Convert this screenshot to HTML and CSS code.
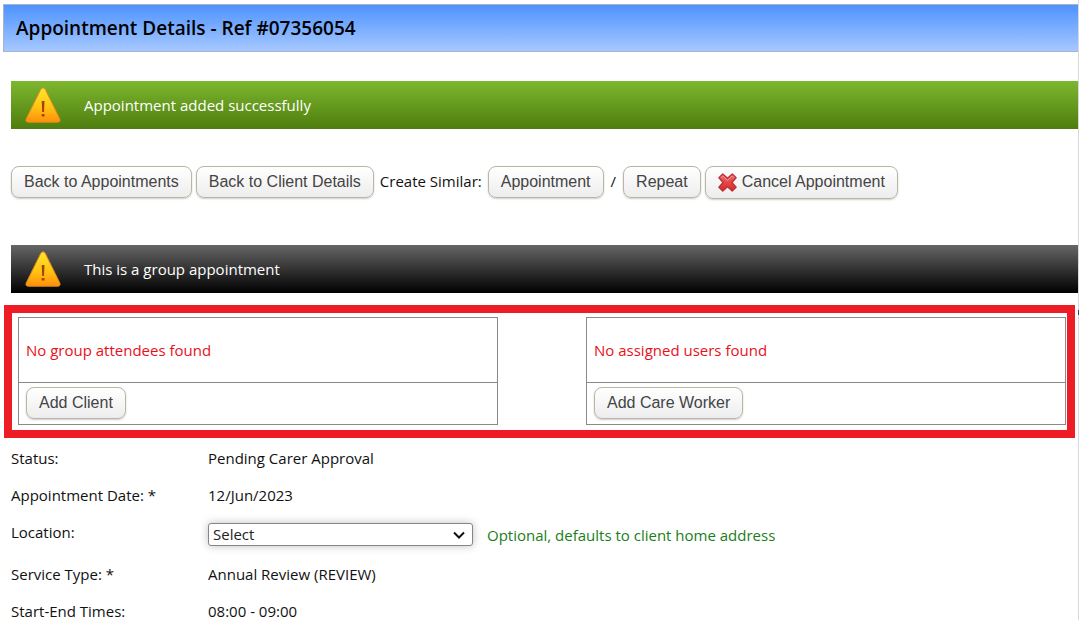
FILE: index.html
```html
<!DOCTYPE html>
<html lang="en">
<head>
    <meta charset="UTF-8">
    <meta name="viewport" content="width=device-width, initial-scale=1.0">
    <title>Appointment Details</title>
    <link rel="stylesheet" href="styles.css">
</head>
<body>
<svg class="defs" width="0" height="0" aria-hidden="true">
    <defs>
        <linearGradient id="warnFill" x1="0" y1="0" x2="0" y2="1">
            <stop offset="0" stop-color="#ffe52e"/>
            <stop offset="0.55" stop-color="#ffc512"/>
            <stop offset="1" stop-color="#ff8f0c"/>
        </linearGradient>
        <linearGradient id="crossFill" x1="0" y1="0" x2="0" y2="1">
            <stop offset="0" stop-color="#ee6a6a"/>
            <stop offset="1" stop-color="#dc2626"/>
        </linearGradient>
        <symbol id="icon-warning" viewBox="0 0 36 36">
            <path d="M15.8 2.2Q18-0.6 20.2 2.2L34.8 32Q35.8 35.2 32.6 35.2H3.4Q0.2 35.2 1.2 32Z" fill="url(#warnFill)" stroke="#e08a1c" stroke-width="1"/>
            <path d="M16.7 14h2.8l-.5 11h-1.800zM16.7 27h2.8v2.6h-2.8z" fill="#a5420a"/>
        </symbol>
    </defs>
</svg>

<div class="page">
    <header class="page-header">
        <h1>Appointment Details - Ref #07356054</h1>
    </header>

    <main class="content">
        <div class="message success">
            <svg class="message-icon" aria-hidden="true"><use href="#icon-warning"/></svg>
            <span>Appointment added successfully</span>
        </div>

        <div class="toolbar">
            <button type="button" class="btn">Back to Appointments</button>
            <button type="button" class="btn">Back to Client Details</button>
            <span class="similar">Create Similar:</span>
            <button type="button" class="btn">Appointment</button>
            <span class="slash">/</span>
            <button type="button" class="btn">Repeat</button>
            <button type="button" class="btn btn-cancel">
                <svg class="btn-icon" viewBox="0 0 20 20" aria-hidden="true">
                    <path d="M5 1L10 5.6L15 1L19 5L14.6 10L19 15L15 19L10 14.4L5 19L1 15L5.4 10L1 5Z" fill="url(#crossFill)" stroke="#b9343a" stroke-width="1.5" stroke-linejoin="round"/>
                    <path d="M3 5L5 3L10 7.8L15 3L17 5" fill="none" stroke="#f59a9a" stroke-width="1"/>
                </svg>
                Cancel Appointment
            </button>
        </div>

        <div class="message group">
            <svg class="message-icon" aria-hidden="true"><use href="#icon-warning"/></svg>
            <span>This is a group appointment</span>
        </div>
    </main>

    <section class="attendees">
        <div class="panel">
            <p class="empty">No group attendees found</p>
            <div class="panel-footer"><button type="button" class="btn">Add Client</button></div>
        </div>
        <div class="panel">
            <p class="empty">No assigned users found</p>
            <div class="panel-footer"><button type="button" class="btn">Add Care Worker</button></div>
        </div>
    </section>

    <form class="details">
        <span>Status:</span>
        <span>Pending Carer Approval</span>

        <span>Appointment Date: *</span>
        <span>12/Jun/2023</span>

        <label for="location">Location:</label>
        <div class="field">
            <div class="select-wrap">
                <select id="location">
                    <option>Select</option>
                </select>
                <svg class="chevron" viewBox="0 0 12 8" aria-hidden="true">
                    <path d="M1 1.5L6 6.5L11 1.5" fill="none" stroke="#111" stroke-width="2"/>
                </svg>
            </div>
            <span class="hint">Optional, defaults to client home address</span>
        </div>

        <span>Service Type: *</span>
        <span>Annual Review (REVIEW)</span>

        <span>Start-End Times:</span>
        <span>08:00 - 09:00</span>
    </form>
</div>
</body>
</html>
```
FILE: styles.css
```css
* {
    box-sizing: border-box;
}

body {
    margin: 0;
    background: #fff;
    color: #111;
    font-family: "Trebuchet MS", "Open Sans", sans-serif;
    font-size: 15px;
    line-height: 18px;
}

.defs {
    position: absolute;
}

.page {
    position: relative;
    min-height: 100vh;
    padding: 4px 0 0 3px;
    border-right: 1px solid #d9d9d9;
}

.page::after {
    content: "";
    position: absolute;
    top: 310px;
    right: -1px;
    width: 1px;
    height: 5px;
    background: #444;
}

.page-header {
    height: 48px;
    padding-left: 12px;
    display: flex;
    align-items: center;
    border: 1px solid #a9b4cc;
    border-right: none;
    background: linear-gradient(#4e93ff, #a6c8ff);
}

.page-header h1 {
    margin: 0;
    color: #000;
    font-size: 19px;
    font-weight: 600;
}

.content {
    padding: 29px 0 0 8px;
}

.message {
    height: 48px;
    padding-left: 14px;
    display: flex;
    align-items: center;
    gap: 23px;
    color: #fff;
}

.message-icon {
    width: 36px;
    height: 36px;
}

.success {
    background: linear-gradient(#7db72f, #4e7d0e);
}

.group {
    background: linear-gradient(#666, #000);
}

.toolbar {
    margin: 37px 0 46px;
    display: flex;
    align-items: flex-start;
    gap: 4px;
    line-height: 30px;
}

.similar {
    padding: 0 2px;
}

.slash {
    padding: 0 3px;
}

.btn {
    height: 32px;
    padding: 0 12px;
    display: flex;
    align-items: center;
    border: 1px solid #b7b7a4;
    border-radius: 8px;
    background: linear-gradient(#fff, #ededed);
    box-shadow: 0 1px 2px rgba(0, 0, 0, 0.2);
    color: #444;
    font-family: Arial, "Liberation Sans", sans-serif;
    font-size: 16px;
    line-height: 20px;
    white-space: nowrap;
    cursor: pointer;
}

.btn-cancel {
    height: 33px;
    padding-bottom: 1px;
    gap: 5px;
}

.btn-icon {
    width: 19px;
    height: 19px;
}

.attendees {
    margin: 12px 3px 0 1px;
    padding: 4px 1px 5px 6px;
    display: grid;
    grid-template-columns: 1fr 1fr;
    gap: 88px;
    border: 8px solid #ee1c25;
}

.panel {
    border: 1px solid #8a8a8e;
}

.empty {
    margin: 0;
    padding: 23px 7px;
    color: #e8101a;
}

.panel-footer {
    padding: 4px 7px 5px;
    border-top: 1px solid #8a8a8e;
}

.details {
    padding: 11px 0 0 8px;
    display: grid;
    grid-template-columns: 197px 1fr;
    row-gap: 19px;
}

.field {
    display: flex;
    align-items: center;
    gap: 14px;
}

.select-wrap {
    position: relative;
    display: flex;
}

.select-wrap select {
    appearance: none;
    width: 265px;
    height: 23px;
    padding: 0 24px 2px 4px;
    border: 1px solid #858585;
    border-radius: 3px;
    background: #fff;
    box-shadow: 0 0 8px rgba(0, 0, 0, 0.25);
    color: #222;
    font: inherit;
}

.chevron {
    position: absolute;
    top: 8px;
    right: 8px;
    width: 12px;
    height: 8px;
    pointer-events: none;
}

.hint {
    color: #188018;
}
```
